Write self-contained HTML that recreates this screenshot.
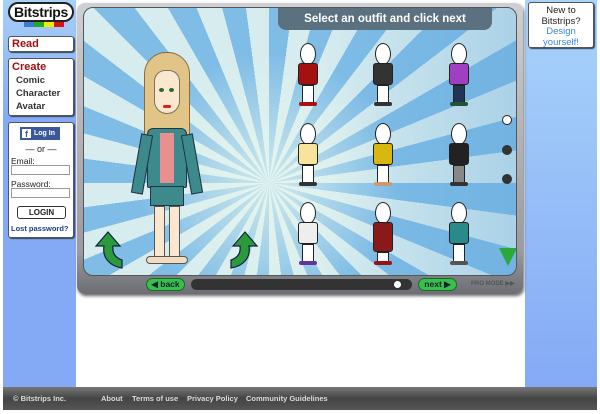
<!DOCTYPE html><html><head><style>
*{margin:0;padding:0;box-sizing:border-box}
body{width:600px;height:414px;background:#fff;font-family:"Liberation Sans",sans-serif;position:relative;overflow:hidden}
.a{position:absolute}
.box{position:absolute;background:#fff;border:1px solid #555;border-radius:3px;box-shadow:1px 1px 1px #345}
.fig{position:absolute;width:22px;height:66px}
.fig .h{position:absolute;left:4px;top:0;width:16px;height:22px;background:#fff;border:1.5px solid #222;border-radius:50%}
.fig .b{position:absolute;left:2px;top:20px;width:20px;height:22px;border:1px solid #222;border-radius:3px}
.fig .l{position:absolute;left:6px;top:42px;width:12px;height:18px;background:#fff;border:1px solid #222}
.fig .s{position:absolute;left:3px;top:59px;width:18px;height:4px;background:#333;border-radius:2px}
</style></head><body>
<div class="a" style="left:3px;top:0;width:594px;height:387px;background:#84aaf6"></div>
<div class="a" style="left:76px;top:0;width:449px;height:387px;background:#fff"></div>
<div class="a" style="left:525px;top:0;width:72px;height:387px;background:linear-gradient(#a9d4fa,#84aaf6)"></div>
<div class="a" style="left:3px;top:0;width:73px;height:387px;background:linear-gradient(#a9d0f6 0,#84aaf6 120px)"></div>
<!-- logo -->
<div class="a" style="left:8px;top:2px;width:66px;height:20px;background:#fff;border:2px solid #222;border-radius:10px;font-weight:bold;font-size:14px;text-align:center;line-height:16px;color:#111;letter-spacing:-0.3px">Bitstrips</div>
<div class="a" style="left:24px;top:22px;width:40px;height:5px;background:linear-gradient(90deg,#3a7ad0 25%,#2a2 25% 50%,#ee0 50% 75%,#d11 75%)"></div>
<div class="box" style="left:8px;top:36px;width:66px;height:16px;font-weight:bold;font-size:11px;color:#a01010;padding:1px 3px">Read</div>
<div class="box" style="left:8px;top:58px;width:66px;height:58px;font-weight:bold;font-size:9.5px;padding:2px 3px;line-height:13px"><div style="color:#a01010;font-size:11px">Create</div><div style="padding-left:4px;color:#333">Comic<br>Character<br>Avatar</div></div>
<div class="box" style="left:8px;top:122px;width:66px;height:116px;font-size:8.5px;color:#222">
<div class="a" style="left:11px;top:4px;width:40px;height:13px;background:#3b5998;color:#fff;font-size:7px;font-weight:bold;line-height:13px;padding-left:14px">Log In<span class="a" style="left:2px;top:2px;width:9px;height:9px;background:#fff;color:#3b5998;font-size:9px;line-height:11px;text-align:center">f</span></div>
<div class="a" style="left:0;top:21px;width:64px;text-align:center;font-size:9px">— or —</div>
<div class="a" style="left:2px;top:33px">Email:</div>
<div class="a" style="left:2px;top:42px;width:59px;height:10px;border:1px solid #999"></div>
<div class="a" style="left:2px;top:56px">Password:</div>
<div class="a" style="left:2px;top:65px;width:59px;height:10px;border:1px solid #999"></div>
<div class="a" style="left:8px;top:83px;width:49px;height:13px;border:1px solid #333;border-radius:3px;font-weight:bold;font-size:8px;text-align:center;line-height:11px">LOGIN</div>
<div class="a" style="left:2px;top:101px;color:#223a8a;font-size:7.5px;font-weight:bold">Lost password?</div>
</div>
<div class="box" style="left:528px;top:2px;width:66px;height:46px;text-align:center;font-size:9.5px;line-height:10.5px;padding-top:3px;color:#222">New to<br>Bitstrips?<br><span style="color:#3a88d8">Design<br>yourself!</span></div>
<!-- flash frame -->
<div class="a" style="left:77px;top:3px;width:446px;height:291px;background:linear-gradient(#cfd0d4,#9a9ba0 85%,#6d6e73);border-radius:8px;box-shadow:1px 2px 3px #666"></div>
<div class="a" style="left:83px;top:7px;width:434px;height:269px;border-radius:10px;overflow:hidden;border:1px solid #555;background:repeating-conic-gradient(from 0deg at 185px 175px,#7fbde6 0 7.5deg,#d6ecee 7.5deg 15deg)">
<div class="a" style="left:0;top:0;width:100%;height:100%;background:radial-gradient(circle at 185px 175px,rgba(235,248,238,.75) 0,rgba(235,248,238,0) 130px),linear-gradient(90deg,rgba(0,0,0,0) 55%,rgba(90,160,220,.35))"></div>
<div class="a" style="left:194px;top:0;width:214px;height:22px;background:#5c7180;border-radius:0 0 8px 8px;color:#fff;font-weight:bold;font-size:11.5px;text-align:center;line-height:22px">Select an outfit and click next</div>
<!-- avatar -->
<div class="a" style="left:60px;top:44px;width:46px;height:90px;background:#e0c488;border:1px solid #8a6a3a;border-radius:22px 22px 6px 6px"></div>
<div class="a" style="left:70px;top:62px;width:26px;height:44px;background:#fbe6cf;border:1px solid #775;border-radius:12px 12px 14px 14px"></div>
<div class="a" style="left:75px;top:80px;width:5px;height:4px;background:#2a6a2a;border-radius:50%"></div>
<div class="a" style="left:85px;top:80px;width:5px;height:4px;background:#2a6a2a;border-radius:50%"></div>
<div class="a" style="left:79px;top:97px;width:8px;height:3px;background:#d22;border-radius:2px"></div>
<div class="a" style="left:63px;top:120px;width:40px;height:60px;background:#3d8a8c;border:1px solid #234;border-radius:6px 6px 2px 2px"></div>
<div class="a" style="left:76px;top:125px;width:14px;height:50px;background:#e89090"></div>
<div class="a" style="left:52px;top:126px;width:12px;height:60px;background:#3d8a8c;border:1px solid #234;transform:rotate(10deg)"></div>
<div class="a" style="left:102px;top:126px;width:12px;height:60px;background:#3d8a8c;border:1px solid #234;transform:rotate(-10deg)"></div>
<div class="a" style="left:66px;top:178px;width:34px;height:20px;background:#3d8a8c;border:1px solid #234"></div>
<div class="a" style="left:70px;top:198px;width:11px;height:52px;background:#fbe6cf;border:1px solid #555"></div>
<div class="a" style="left:85px;top:198px;width:11px;height:52px;background:#fbe6cf;border:1px solid #555"></div>
<div class="a" style="left:62px;top:248px;width:42px;height:8px;background:#f4dcc0;border:1px solid #555;border-radius:5px"></div>
<!-- arrows -->
<svg class="a" style="left:10px;top:222px" width="30" height="40" viewBox="0 0 30 40"><path d="M14 2 L2 16 L10 16 C8 28 16 36 28 38 L28 30 C22 28 18 24 19 16 L26 16 Z" fill="#2a9a3a" stroke="#124" stroke-width="1.2"/></svg>
<svg class="a" style="left:145px;top:222px" width="30" height="40" viewBox="0 0 30 40"><path d="M16 2 L28 16 L20 16 C22 28 14 36 2 38 L2 30 C8 28 12 24 11 16 L4 16 Z" fill="#2a9a3a" stroke="#124" stroke-width="1.2"/></svg>
<div class="a" style="left:415px;top:240px;width:0;height:0;border-left:9px solid transparent;border-right:9px solid transparent;border-top:18px solid #2aa83a"></div>
<div class="a" style="left:418px;top:107px;width:10px;height:10px;background:#fff;border:1.5px solid #222;border-radius:50%"></div>
<div class="a" style="left:418px;top:137px;width:10px;height:10px;background:#333;border-radius:50%"></div>
<div class="a" style="left:418px;top:166px;width:10px;height:10px;background:#333;border-radius:50%"></div>
</div>
<!-- outfits -->
<div class="fig" style="left:296px;top:43px"><div class="h"></div><div class="b" style="background:#a51010"></div><div class="l"></div><div class="s" style="background:#a11"></div></div>
<div class="fig" style="left:371px;top:43px"><div class="h"></div><div class="b" style="background:#333"></div><div class="l"></div><div class="s"></div></div>
<div class="fig" style="left:447px;top:43px"><div class="h"></div><div class="b" style="background:#a040c0"></div><div class="l" style="background:#235"></div><div class="s" style="background:#253"></div></div>
<div class="fig" style="left:296px;top:123px"><div class="h"></div><div class="b" style="background:#f8e39a"></div><div class="l"></div><div class="s"></div></div>
<div class="fig" style="left:371px;top:123px"><div class="h"></div><div class="b" style="background:#d8b810"></div><div class="l"></div><div class="s" style="background:#c97"></div></div>
<div class="fig" style="left:447px;top:123px"><div class="h"></div><div class="b" style="background:#222"></div><div class="l" style="background:#888"></div><div class="s"></div></div>
<div class="fig" style="left:296px;top:202px"><div class="h"></div><div class="b" style="background:#eee"></div><div class="l"></div><div class="s" style="background:#639"></div></div>
<div class="fig" style="left:371px;top:202px"><div class="h"></div><div class="b" style="background:#8a1a1a;height:30px"></div><div class="l" style="top:50px;height:10px"></div><div class="s" style="background:#911"></div></div>
<div class="fig" style="left:447px;top:202px"><div class="h"></div><div class="b" style="background:#2a8a8a"></div><div class="l"></div><div class="s" style="background:#555"></div></div>
<!-- bottom bar -->
<div class="a" style="left:146px;top:278px;width:39px;height:13px;background:#3ac04a;border:1px solid #1a6a2a;border-radius:7px;font-size:8.5px;font-weight:bold;color:#123;text-align:center;line-height:11px">◀ back</div>
<div class="a" style="left:191px;top:279px;width:221px;height:11px;background:#333;border-radius:6px"></div>
<div class="a" style="left:394px;top:281px;width:7px;height:7px;background:#fff;border-radius:50%"></div>
<div class="a" style="left:418px;top:278px;width:39px;height:13px;background:#3ac04a;border:1px solid #1a6a2a;border-radius:7px;font-size:8.5px;font-weight:bold;color:#123;text-align:center;line-height:11px">next ▶</div>
<div class="a" style="left:471px;top:280px;font-size:6px;font-weight:bold;color:#555">PRO MODE ▶▶</div>
<!-- footer -->
<div class="a" style="left:3px;top:387px;width:594px;height:23px;background:linear-gradient(#777,#444 50%,#555);color:#ddd;font-size:7.5px;font-weight:bold;line-height:24px">
<span class="a" style="left:10px">© Bitstrips Inc.</span><span class="a" style="left:98px">About</span><span class="a" style="left:129px">Terms of use</span><span class="a" style="left:184px">Privacy Policy</span><span class="a" style="left:243px">Community Guidelines</span></div>
</body></html>
